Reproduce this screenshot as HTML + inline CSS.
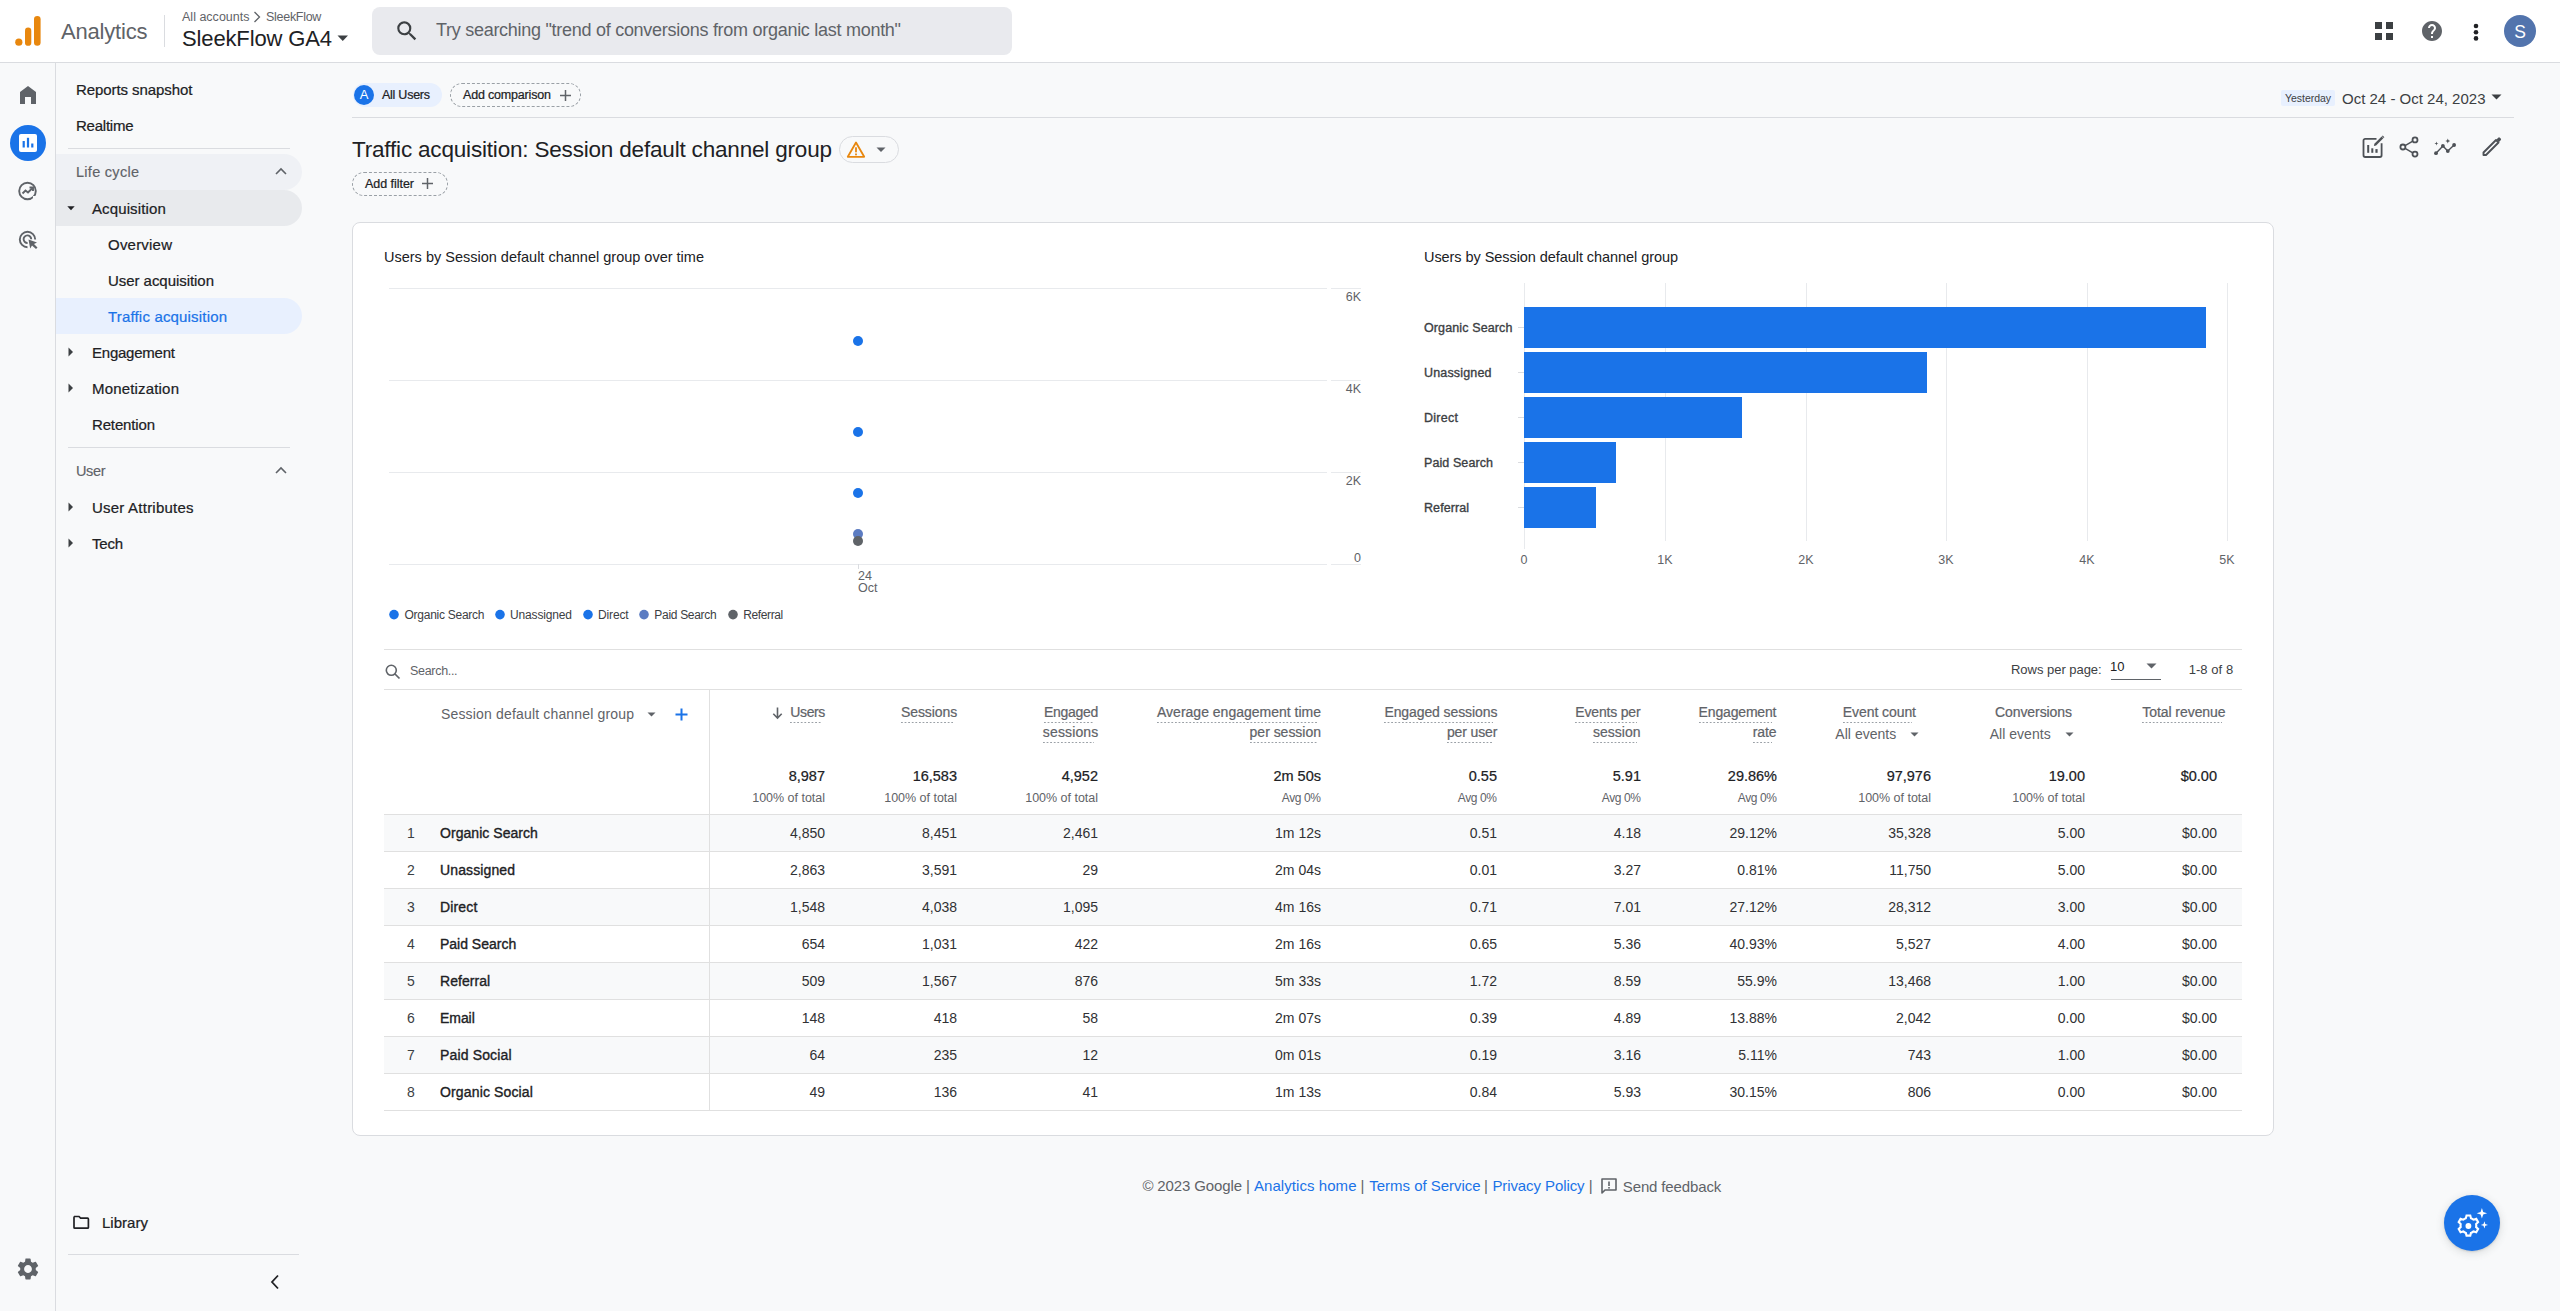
<!DOCTYPE html>
<html><head><meta charset="utf-8"><style>*{box-sizing:border-box;margin:0;padding:0}
html,body{width:2560px;height:1311px;overflow:hidden;background:#f8f9fa;font-family:"Liberation Sans",sans-serif;color:#202124}
.a{position:absolute;white-space:nowrap}
</style></head><body>
<div class="a" style="left:0px;top:0px;width:2560px;height:62px;background:#fff"></div>
<div class="a" style="left:0px;top:62px;width:2560px;height:1px;background:#dadce0"></div>
<svg class="a" style="left:0px;top:0px" width="60" height="62" viewBox="0 0 60 62"><circle cx="18.8" cy="42.2" r="3.6" fill="#e8870e"/><rect x="25" y="27.6" width="6.3" height="18.2" rx="3.15" fill="#e8870e"/><rect x="34" y="16" width="6.6" height="29.8" rx="3.3" fill="#e8870e"/></svg>
<div class="a" id="t1" style="top:15.50px;left:61px;font-size:22px;line-height:31px;color:#5f6368;letter-spacing:-0.193px;">Analytics</div>
<div class="a" style="left:164px;top:15px;width:1px;height:32px;background:#dadce0"></div>
<div class="a" id="t2" style="top:8.00px;left:182px;font-size:12.5px;line-height:18px;color:#5f6368;letter-spacing:0.009px;">All accounts</div>
<svg class="a" style="left:253px;top:11px" width="8" height="12" viewBox="0 0 8 12"><path d="M1.5 1 L6.5 6 L1.5 11" stroke="#5f6368" stroke-width="1.3" fill="none"/></svg>
<div class="a" id="t3" style="top:8.00px;left:266px;font-size:12.5px;line-height:18px;color:#5f6368;letter-spacing:-0.284px;">SleekFlow</div>
<div class="a" id="t4" style="top:22.50px;left:182px;font-size:22px;line-height:31px;color:#202124;letter-spacing:-0.135px;">SleekFlow GA4</div>
<svg class="a" style="left:337px;top:35px" width="12" height="7" viewBox="0 0 12 7"><path d="M0.5 0.5 L5.75 6 L11 0.5Z" fill="#3c4043"/></svg>
<div class="a" style="left:372px;top:7px;width:640px;height:48px;background:#e9eaee;border-radius:8px"></div>
<svg class="a" style="left:394px;top:18px" width="26" height="26" viewBox="0 0 24 24"><path fill="#3c4043" d="M15.5 14h-.79l-.28-.27A6.47 6.47 0 0 0 16 9.5 6.5 6.5 0 1 0 9.5 16c1.61 0 3.09-.59 4.23-1.57l.27.28v.79l5 4.99L20.49 19l-4.99-5zm-6 0C7.01 14 5 11.99 5 9.5S7.01 5 9.5 5 14 7.01 14 9.5 11.99 14 9.5 14z"/></svg>
<div class="a" id="t5" style="top:17.50px;left:436px;font-size:18px;line-height:25px;color:#5f6368;letter-spacing:-0.277px;">Try searching "trend of conversions from organic last month"</div>
<svg class="a" style="left:2374px;top:21px" width="20" height="20" viewBox="0 0 20 20"><rect x="1" y="1" width="7" height="7" fill="#3c4043"/><rect x="12" y="1" width="7" height="7" fill="#3c4043"/><rect x="1" y="12" width="7" height="7" fill="#3c4043"/><rect x="12" y="12" width="7" height="7" fill="#3c4043"/></svg>
<svg class="a" style="left:2420px;top:19px" width="24" height="24" viewBox="0 0 24 24"><path fill="#5f6368" d="M12 2C6.48 2 2 6.48 2 12s4.48 10 10 10 10-4.48 10-10S17.52 2 12 2zm1 17h-2v-2h2v2zm2.07-7.75l-.9.92C13.45 12.9 13 13.5 13 15h-2v-.5c0-1.1.45-2.1 1.17-2.83l1.24-1.26c.37-.36.59-.86.59-1.41 0-1.1-.9-2-2-2s-2 .9-2 2H8c0-2.21 1.79-4 4-4s4 1.79 4 4c0 .88-.36 1.68-.93 2.25z"/></svg>
<svg class="a" style="left:2470px;top:20px" width="12" height="24" viewBox="0 0 12 24"><circle cx="6" cy="6" r="2.3" fill="#202124"/><circle cx="6" cy="12.2" r="2.3" fill="#202124"/><circle cx="6" cy="18.4" r="2.3" fill="#202124"/></svg>
<div class="a" style="left:2504px;top:15px;width:32px;height:32px;background:#5274ad;border-radius:50%"></div>
<div class="a" id="t6" style="top:19.50px;left:2520px;transform:translateX(-50%);font-size:17.5px;line-height:24px;color:#fff;">S</div>
<div class="a" style="left:55px;top:63px;width:1px;height:1248px;background:#dadce0"></div>
<svg class="a" style="left:16px;top:83px" width="24" height="24" viewBox="0 0 24 24"><path fill="#5f6368" d="M12 3L4 9v12h5v-7h6v7h5V9z"/></svg>
<div class="a" style="left:10px;top:125px;width:36px;height:36px;background:#1a73e8;border-radius:50%"></div>
<svg class="a" style="left:18px;top:133px" width="20" height="20" viewBox="0 0 20 20"><rect x="1" y="1" width="18" height="18" rx="2" fill="#fff"/><rect x="4.6" y="8" width="2.2" height="6.5" fill="#1a73e8"/><rect x="8.9" y="4.8" width="2.2" height="9.7" fill="#1a73e8"/><rect x="13.2" y="10.5" width="2.2" height="4" fill="#1a73e8"/></svg>
<svg class="a" style="left:16px;top:179px" width="24" height="24" viewBox="0 0 24 24"><circle cx="11.5" cy="12" r="8.3" fill="none" stroke="#5f6368" stroke-width="1.9"/><path d="M6.5 14.5 L9.5 11.5 L12 13.5 L16 9.5" fill="none" stroke="#5f6368" stroke-width="1.9"/><path d="M13.5 8.5 L17 8.5 L17 12" fill="none" stroke="#5f6368" stroke-width="1.9"/><rect x="17" y="17" width="4" height="4" fill="#f8f9fa"/></svg>
<svg class="a" style="left:16px;top:227px" width="24" height="24" viewBox="0 0 24 24"><path d="M19.2 12.5 A7.7 7.7 0 1 0 11.5 20.2" fill="none" stroke="#5f6368" stroke-width="1.9"/><path d="M15.2 12.2 A3.8 3.8 0 1 0 11.6 16" fill="none" stroke="#5f6368" stroke-width="1.9"/><path d="M12.5 12.5 L14.2 21.5 L16 18.5 L20 22 L21.5 20.5 L18 17 L21 15.5Z" fill="#5f6368"/></svg>
<svg class="a" style="left:15px;top:1256px" width="26" height="26" viewBox="0 0 24 24"><path fill="#5f6368" d="M19.14 12.94c.04-.3.06-.61.06-.94 0-.32-.02-.64-.07-.94l2.03-1.58a.49.49 0 0 0 .12-.61l-1.92-3.32a.49.49 0 0 0-.59-.22l-2.39.96c-.5-.38-1.03-.7-1.62-.94l-.36-2.54a.48.48 0 0 0-.48-.41h-3.84c-.24 0-.43.17-.47.41l-.36 2.54c-.59.24-1.13.57-1.62.94l-2.39-.96a.48.48 0 0 0-.59.22L2.74 8.87c-.12.21-.08.47.12.61l2.03 1.58c-.05.3-.09.63-.09.94s.02.64.07.94l-2.03 1.58a.49.49 0 0 0-.12.61l1.92 3.32c.12.22.37.29.59.22l2.39-.96c.5.38 1.03.7 1.62.94l.36 2.54c.05.24.24.41.48.41h3.84c.24 0 .44-.17.47-.41l.36-2.54c.59-.24 1.13-.56 1.62-.94l2.39.96c.22.08.47 0 .59-.22l1.92-3.32c.12-.22.07-.47-.12-.61l-2.01-1.58zM12 15.6c-1.98 0-3.6-1.62-3.6-3.6s1.62-3.6 3.6-3.6 3.6 1.62 3.6 3.6-1.62 3.6-3.6 3.6z"/></svg>
<div class="a" id="t7" style="top:78.50px;left:76px;font-size:15px;line-height:21px;color:#202124;-webkit-text-stroke:0.22px currentColor;letter-spacing:-0.072px;">Reports snapshot</div>
<div class="a" id="t8" style="top:114.50px;left:76px;font-size:15px;line-height:21px;color:#202124;-webkit-text-stroke:0.22px currentColor;letter-spacing:-0.241px;">Realtime</div>
<div class="a" style="left:68px;top:148px;width:222px;height:1px;background:#dadce0"></div>
<div class="a" style="left:56px;top:154px;width:246px;height:36px;background:#eff1f5;border-radius:0 18px 18px 0"></div>
<div class="a" id="t9" style="top:162.00px;left:76px;font-size:14.5px;line-height:20px;color:#5f6368;-webkit-text-stroke:0.15px currentColor;letter-spacing:0.283px;">Life cycle</div>
<svg class="a" style="left:274px;top:166px" width="14" height="10" viewBox="0 0 14 10"><path d="M2 8 L7 3 L12 8" fill="none" stroke="#5f6368" stroke-width="1.6"/></svg>
<div class="a" style="left:56px;top:190px;width:246px;height:36px;background:#e8eaed;border-radius:0 18px 18px 0"></div>
<svg class="a" style="left:67px;top:206px" width="8" height="5" viewBox="0 0 8 5"><path d="M0.3 0.3 L4 4.3 L7.7 0.3Z" fill="#202124"/></svg>
<div class="a" id="t10" style="top:197.50px;left:92px;font-size:15px;line-height:21px;color:#202124;-webkit-text-stroke:0.22px currentColor;letter-spacing:0.120px;">Acquisition</div>
<div class="a" id="t11" style="top:233.50px;left:108px;font-size:15px;line-height:21px;color:#202124;-webkit-text-stroke:0.22px currentColor;letter-spacing:0.212px;">Overview</div>
<div class="a" id="t12" style="top:269.50px;left:108px;font-size:15px;line-height:21px;color:#202124;-webkit-text-stroke:0.22px currentColor;letter-spacing:-0.048px;">User acquisition</div>
<div class="a" style="left:56px;top:298px;width:246px;height:36px;background:#e8f0fe;border-radius:0 18px 18px 0"></div>
<div class="a" id="t13" style="top:305.50px;left:108px;font-size:15px;line-height:21px;color:#1a73e8;-webkit-text-stroke:0.22px currentColor;letter-spacing:0.173px;">Traffic acquisition</div>
<svg class="a" style="left:68px;top:347px" width="6" height="10" viewBox="0 0 6 10"><path d="M0.5 0.5 L5 5 L0.5 9.5Z" fill="#3c4043"/></svg>
<div class="a" id="t14" style="top:341.50px;left:92px;font-size:15px;line-height:21px;color:#202124;-webkit-text-stroke:0.22px currentColor;letter-spacing:-0.231px;">Engagement</div>
<svg class="a" style="left:68px;top:383px" width="6" height="10" viewBox="0 0 6 10"><path d="M0.5 0.5 L5 5 L0.5 9.5Z" fill="#3c4043"/></svg>
<div class="a" id="t15" style="top:377.50px;left:92px;font-size:15px;line-height:21px;color:#202124;-webkit-text-stroke:0.22px currentColor;letter-spacing:0.176px;">Monetization</div>
<svg class="a" style="left:68px;top:502px" width="6" height="10" viewBox="0 0 6 10"><path d="M0.5 0.5 L5 5 L0.5 9.5Z" fill="#3c4043"/></svg>
<div class="a" id="t16" style="top:496.50px;left:92px;font-size:15px;line-height:21px;color:#202124;-webkit-text-stroke:0.22px currentColor;letter-spacing:0.223px;">User Attributes</div>
<svg class="a" style="left:68px;top:538px" width="6" height="10" viewBox="0 0 6 10"><path d="M0.5 0.5 L5 5 L0.5 9.5Z" fill="#3c4043"/></svg>
<div class="a" id="t17" style="top:532.50px;left:92px;font-size:15px;line-height:21px;color:#202124;-webkit-text-stroke:0.22px currentColor;letter-spacing:-0.229px;">Tech</div>
<div class="a" id="t18" style="top:413.50px;left:92px;font-size:15px;line-height:21px;color:#202124;-webkit-text-stroke:0.22px currentColor;letter-spacing:-0.152px;">Retention</div>
<div class="a" style="left:68px;top:447px;width:222px;height:1px;background:#dadce0"></div>
<div class="a" id="t19" style="top:461.00px;left:76px;font-size:14.5px;line-height:20px;color:#5f6368;-webkit-text-stroke:0.15px currentColor;letter-spacing:-0.375px;">User</div>
<svg class="a" style="left:274px;top:465px" width="14" height="10" viewBox="0 0 14 10"><path d="M2 8 L7 3 L12 8" fill="none" stroke="#5f6368" stroke-width="1.6"/></svg>
<svg class="a" style="left:72px;top:1214px" width="18" height="16" viewBox="0 0 18 16"><path d="M2 2.5 h5 l1.6 1.6 h7 a0.8 0.8 0 0 1 .8 .8 v8.5 a0.8 0.8 0 0 1 -.8 .8 h-12.8 a0.8 0.8 0 0 1 -.8 -.8 v-10 a0.8 0.8 0 0 1 .8 -.8z" fill="none" stroke="#202124" stroke-width="1.7"/></svg>
<div class="a" id="t20" style="top:1211.50px;left:102px;font-size:15px;line-height:21px;color:#202124;-webkit-text-stroke:0.22px currentColor;letter-spacing:0.023px;">Library</div>
<div class="a" style="left:68px;top:1254px;width:231px;height:1px;background:#dadce0"></div>
<svg class="a" style="left:269px;top:1274px" width="12" height="16" viewBox="0 0 12 16"><path d="M9 1.5 L3 8 L9 14.5" fill="none" stroke="#202124" stroke-width="1.8"/></svg>
<div class="a" style="left:353px;top:83px;width:89px;height:24px;background:#e8f0fe;border-radius:12px"></div>
<div class="a" style="left:354px;top:85px;width:20px;height:20px;background:#1a73e8;border-radius:50%"></div>
<div class="a" id="t21" style="top:86.00px;left:364px;transform:translateX(-50%);font-size:13px;line-height:18px;color:#fff;">A</div>
<div class="a" id="t22" style="top:86.00px;left:382px;font-size:12.5px;line-height:18px;color:#202124;-webkit-text-stroke:0.22px currentColor;letter-spacing:-0.252px;">All Users</div>
<div class="a" style="left:450px;top:83px;width:131px;height:24px;border:1px dashed #9aa0a6;border-radius:12px"></div>
<div class="a" id="t23" style="top:86.00px;left:463px;font-size:12.5px;line-height:18px;color:#202124;-webkit-text-stroke:0.22px currentColor;letter-spacing:-0.179px;">Add comparison</div>
<svg class="a" style="left:559px;top:89px" width="13" height="13" viewBox="0 0 13 13"><path d="M6.5 1 V12 M1 6.5 H12" stroke="#5f6368" stroke-width="1.5"/></svg>
<div class="a" style="left:2281px;top:90px;width:54px;height:16px;background:#e8f0fe;border-radius:2px"></div>
<div class="a" id="t24" style="top:90.50px;left:2308px;transform:translateX(-50%);font-size:10.5px;line-height:15px;color:#3c4043;letter-spacing:-0.039px;">Yesterday</div>
<div class="a" id="t25" style="top:87.50px;left:2342px;font-size:15px;line-height:21px;color:#3c4043;letter-spacing:0.004px;">Oct 24 - Oct 24, 2023</div>
<svg class="a" style="left:2491px;top:94px" width="11" height="6" viewBox="0 0 11 6"><path d="M0.5 0.5 L5.5 5.5 L10.5 0.5Z" fill="#3c4043"/></svg>
<div class="a" style="left:352px;top:117px;width:2162px;height:1px;background:#dadce0"></div>
<div class="a" id="t26" style="top:133.50px;left:352px;font-size:22.5px;line-height:31px;color:#202124;letter-spacing:-0.185px;">Traffic acquisition: Session default channel group</div>
<div class="a" style="left:839px;top:136px;width:60px;height:27px;border:1px solid #dadce0;border-radius:14px"></div>
<svg class="a" style="left:846px;top:140px" width="20" height="19" viewBox="0 0 20 19"><path d="M10 2.5 L18.2 16.8 H1.8Z" fill="none" stroke="#e8870e" stroke-width="1.8" stroke-linejoin="round"/><rect x="9.1" y="7.3" width="1.8" height="5" fill="#e8870e"/><rect x="9.1" y="13.5" width="1.8" height="1.8" fill="#e8870e"/></svg>
<svg class="a" style="left:876px;top:147px" width="10" height="6" viewBox="0 0 10 6"><path d="M0.5 0.5 L5 5 L9.5 0.5Z" fill="#5f6368"/></svg>
<div class="a" style="left:352px;top:172px;width:96px;height:24px;border:1px dashed #9aa0a6;border-radius:12px"></div>
<div class="a" id="t27" style="top:175.00px;left:365px;font-size:12.5px;line-height:18px;color:#202124;-webkit-text-stroke:0.22px currentColor;letter-spacing:-0.038px;">Add filter</div>
<svg class="a" style="left:421px;top:177px" width="13" height="13" viewBox="0 0 13 13"><path d="M6.5 1 V12 M1 6.5 H12" stroke="#5f6368" stroke-width="1.5"/></svg>
<svg class="a" style="left:2355px;top:130px" width="110" height="35" viewBox="0 0 110 35"><path d="M21.5 8.9 H10.2 a1.7 1.7 0 0 0 -1.7 1.7 V25.3 a1.7 1.7 0 0 0 1.7 1.7 H24.9 a1.7 1.7 0 0 0 1.7 -1.7 V13.2" fill="none" stroke="#4d5156" stroke-width="1.8"/><rect x="12.2" y="15" width="2" height="7.8" fill="#4d5156"/><rect x="16.3" y="18.3" width="2" height="4.5" fill="#4d5156"/><rect x="20.4" y="19.1" width="2.2" height="3.7" fill="#4d5156"/><path d="M18.9 15.9 L19.4 13.8 L26.6 6.6 L28.3 8.3 L21.1 15.5Z" fill="#4d5156"/><path d="M26.9 6.3 L27.7 5.5 L29.4 7.2 L28.6 8Z" fill="#4d5156"/><circle cx="60" cy="9.9" r="2.5" fill="none" stroke="#4d5156" stroke-width="1.8"/><circle cx="47.9" cy="17" r="2.5" fill="none" stroke="#4d5156" stroke-width="1.8"/><circle cx="60" cy="24.1" r="2.5" fill="none" stroke="#4d5156" stroke-width="1.8"/><path d="M50.1 15.7 L57.8 11.2 M50.1 18.3 L57.8 22.8" stroke="#4d5156" stroke-width="1.5"/><path d="M81 23.2 L87.9 15.9 L92.8 21.1 L99.1 15" fill="none" stroke="#4d5156" stroke-width="1.4"/><circle cx="81" cy="23.2" r="1.9" fill="#4d5156"/><circle cx="87.9" cy="15.9" r="1.9" fill="#4d5156"/><circle cx="92.8" cy="21.1" r="1.9" fill="#4d5156"/><circle cx="99.1" cy="15" r="1.9" fill="#4d5156"/><path d="M81.4 11.5 L81.9 13 L83.4 13.5 L81.9 14 L81.4 15.5 L80.9 14 L79.4 13.5 L80.9 13Z" fill="#4d5156"/><path d="M92.8 8.6 L93.5 10.3 L95.2 11 L93.5 11.7 L92.8 13.4 L92.1 11.7 L90.4 11 L92.1 10.3Z" fill="#4d5156"/></svg>
<svg class="a" style="left:2479.5px;top:135px" width="22" height="22" viewBox="0 0 22 22"><path d="M3.5 17.5 V20 H6 L18.5 7.5 L16 5 Z" fill="none" stroke="#4d5156" stroke-width="1.9" stroke-linejoin="round"/><path d="M16.5 4.5 L18.2 2.8 A1.2 1.2 0 0 1 19.9 2.8 L20.7 3.6 A1.2 1.2 0 0 1 20.7 5.3 L19 7Z" fill="#4d5156"/></svg>
<div class="a" style="left:352px;top:222px;width:1922px;height:914px;background:#fff;border:1px solid #dadce0;border-radius:8px"></div>
<div class="a" id="t28" style="top:247.00px;left:384px;font-size:14.5px;line-height:20px;color:#202124;letter-spacing:0.000px;">Users by Session default channel group over time</div>
<div class="a" style="left:389px;top:288px;width:938px;height:1px;background:#e8eaed"></div>
<div class="a" style="left:1331px;top:288px;width:30px;height:1px;background:#e8eaed"></div>
<div class="a" id="t29" style="top:288.00px;right:1199px;font-size:12.5px;line-height:18px;color:#5f6368;">6K</div>
<div class="a" style="left:389px;top:380px;width:938px;height:1px;background:#e8eaed"></div>
<div class="a" style="left:1331px;top:380px;width:30px;height:1px;background:#e8eaed"></div>
<div class="a" id="t30" style="top:380.00px;right:1199px;font-size:12.5px;line-height:18px;color:#5f6368;">4K</div>
<div class="a" style="left:389px;top:472px;width:938px;height:1px;background:#e8eaed"></div>
<div class="a" style="left:1331px;top:472px;width:30px;height:1px;background:#e8eaed"></div>
<div class="a" id="t31" style="top:472.00px;right:1199px;font-size:12.5px;line-height:18px;color:#5f6368;">2K</div>
<div class="a" style="left:389px;top:564px;width:938px;height:1px;background:#e8eaed"></div>
<div class="a" style="left:1331px;top:564px;width:30px;height:1px;background:#e8eaed"></div>
<div class="a" id="t32" style="top:548.50px;right:1199px;font-size:12.5px;line-height:18px;color:#5f6368;">0</div>
<div class="a" style="left:858px;top:564px;width:1px;height:5px;background:#dadce0"></div>
<div class="a" id="t33" style="top:567.00px;left:858px;font-size:12.5px;line-height:18px;color:#5f6368;">24</div>
<div class="a" id="t34" style="top:579.00px;left:858px;font-size:12.5px;line-height:18px;color:#5f6368;">Oct</div>
<svg class="a" style="left:840px;top:320px" width="40" height="240" viewBox="0 0 40 240"><circle cx="18" cy="21" r="5" fill="#1a73e8"/><circle cx="18" cy="112" r="5" fill="#1a73e8"/><circle cx="18" cy="173" r="5" fill="#1a73e8"/><circle cx="18" cy="214" r="5" fill="#5c7cc2"/><circle cx="18" cy="221" r="5" fill="#5f6368"/></svg>
<svg class="a" style="left:384px;top:605px" width="360" height="20" viewBox="0 0 360 20"><circle cx="10" cy="9.6" r="4.8" fill="#1a73e8"/><circle cx="116" cy="9.6" r="4.8" fill="#1a73e8"/><circle cx="204" cy="9.6" r="4.8" fill="#1a73e8"/><circle cx="260" cy="9.6" r="4.8" fill="#5c7cc2"/><circle cx="349" cy="9.6" r="4.8" fill="#5f6368"/></svg>
<div class="a" id="t35" style="top:606.50px;left:404.5px;font-size:12px;line-height:17px;color:#3c4043;letter-spacing:-0.260px;">Organic Search</div>
<div class="a" id="t36" style="top:606.50px;left:510px;font-size:12px;line-height:17px;color:#3c4043;letter-spacing:-0.153px;">Unassigned</div>
<div class="a" id="t37" style="top:606.50px;left:598px;font-size:12px;line-height:17px;color:#3c4043;letter-spacing:-0.129px;">Direct</div>
<div class="a" id="t38" style="top:606.50px;left:654.3px;font-size:12px;line-height:17px;color:#3c4043;letter-spacing:-0.298px;">Paid Search</div>
<div class="a" id="t39" style="top:606.50px;left:743.3px;font-size:12px;line-height:17px;color:#3c4043;letter-spacing:-0.384px;">Referral</div>
<div class="a" id="t40" style="top:247.00px;left:1424px;font-size:14.5px;line-height:20px;color:#202124;letter-spacing:-0.063px;">Users by Session default channel group</div>
<div class="a" style="left:1524px;top:283px;width:1px;height:266px;background:#e8eaed"></div>
<div class="a" id="t41" style="top:551.00px;left:1524px;transform:translateX(-50%);font-size:12.5px;line-height:18px;color:#5f6368;">0</div>
<div class="a" style="left:1665px;top:283px;width:1px;height:258px;background:#e8eaed"></div>
<div class="a" id="t42" style="top:551.00px;left:1665px;transform:translateX(-50%);font-size:12.5px;line-height:18px;color:#5f6368;">1K</div>
<div class="a" style="left:1806px;top:283px;width:1px;height:258px;background:#e8eaed"></div>
<div class="a" id="t43" style="top:551.00px;left:1806px;transform:translateX(-50%);font-size:12.5px;line-height:18px;color:#5f6368;">2K</div>
<div class="a" style="left:1946px;top:283px;width:1px;height:258px;background:#e8eaed"></div>
<div class="a" id="t44" style="top:551.00px;left:1946px;transform:translateX(-50%);font-size:12.5px;line-height:18px;color:#5f6368;">3K</div>
<div class="a" style="left:2087px;top:283px;width:1px;height:258px;background:#e8eaed"></div>
<div class="a" id="t45" style="top:551.00px;left:2087px;transform:translateX(-50%);font-size:12.5px;line-height:18px;color:#5f6368;">4K</div>
<div class="a" style="left:2227px;top:283px;width:1px;height:258px;background:#e8eaed"></div>
<div class="a" id="t46" style="top:551.00px;left:2227px;transform:translateX(-50%);font-size:12.5px;line-height:18px;color:#5f6368;">5K</div>
<div class="a" style="left:1524px;top:307px;width:682px;height:41px;background:#1a73e8"></div>
<div class="a" style="left:1518px;top:327px;width:6px;height:1px;background:#dadce0"></div>
<div class="a" id="t47" style="top:318.50px;left:1424px;font-size:12.5px;line-height:18px;color:#3c4043;-webkit-text-stroke:0.35px currentColor;letter-spacing:0.119px;">Organic Search</div>
<div class="a" style="left:1524px;top:352px;width:403px;height:41px;background:#1a73e8"></div>
<div class="a" style="left:1518px;top:372px;width:6px;height:1px;background:#dadce0"></div>
<div class="a" id="t48" style="top:363.50px;left:1424px;font-size:12.5px;line-height:18px;color:#3c4043;-webkit-text-stroke:0.35px currentColor;letter-spacing:0.165px;">Unassigned</div>
<div class="a" style="left:1524px;top:397px;width:218px;height:41px;background:#1a73e8"></div>
<div class="a" style="left:1518px;top:417px;width:6px;height:1px;background:#dadce0"></div>
<div class="a" id="t49" style="top:408.50px;left:1424px;font-size:12.5px;line-height:18px;color:#3c4043;-webkit-text-stroke:0.35px currentColor;letter-spacing:0.269px;">Direct</div>
<div class="a" style="left:1524px;top:442px;width:92px;height:41px;background:#1a73e8"></div>
<div class="a" style="left:1518px;top:462px;width:6px;height:1px;background:#dadce0"></div>
<div class="a" id="t50" style="top:453.50px;left:1424px;font-size:12.5px;line-height:18px;color:#3c4043;-webkit-text-stroke:0.35px currentColor;letter-spacing:0.089px;">Paid Search</div>
<div class="a" style="left:1524px;top:487px;width:72px;height:41px;background:#1a73e8"></div>
<div class="a" style="left:1518px;top:507px;width:6px;height:1px;background:#dadce0"></div>
<div class="a" id="t51" style="top:498.50px;left:1424px;font-size:12.5px;line-height:18px;color:#3c4043;-webkit-text-stroke:0.35px currentColor;letter-spacing:0.076px;">Referral</div>
<div class="a" style="left:384px;top:649px;width:1858px;height:1px;background:#e0e0e0"></div>
<svg class="a" style="left:384px;top:663px" width="18" height="18" viewBox="0 0 18 18"><circle cx="7.3" cy="7.3" r="5" fill="none" stroke="#5f6368" stroke-width="1.6"/><path d="M11 11 L15.5 15.5" stroke="#5f6368" stroke-width="1.7"/></svg>
<div class="a" id="t52" style="top:661.50px;left:410px;font-size:12.5px;line-height:18px;color:#5f6368;letter-spacing:-0.304px;">Search...</div>
<div class="a" id="t53" style="top:660.50px;left:2011px;font-size:13px;line-height:18px;color:#3c4043;letter-spacing:-0.028px;">Rows per page:</div>
<div class="a" id="t54" style="top:658.00px;left:2110px;font-size:13px;line-height:18px;color:#202124;">10</div>
<svg class="a" style="left:2146px;top:663px" width="12" height="7" viewBox="0 0 12 7"><path d="M0.5 0.5 L5.5 5.5 L10.5 0.5Z" fill="#5f6368"/></svg>
<div class="a" style="left:2111px;top:679px;width:50px;height:1px;background:#5f6368"></div>
<div class="a" id="t55" style="top:660.50px;right:326.8000000000002px;font-size:13px;line-height:18px;color:#3c4043;letter-spacing:0.058px;margin-right:-0.058px;">1-8 of 8</div>
<div class="a" style="left:384px;top:689px;width:1858px;height:1px;background:#e0e0e0"></div>
<div class="a" style="left:384px;top:814px;width:1858px;height:37px;background:#f8f9fa"></div>
<div class="a" style="left:384px;top:888px;width:1858px;height:37px;background:#f8f9fa"></div>
<div class="a" style="left:384px;top:962px;width:1858px;height:37px;background:#f8f9fa"></div>
<div class="a" style="left:384px;top:1036px;width:1858px;height:37px;background:#f8f9fa"></div>
<div class="a" style="left:384px;top:851px;width:1858px;height:1px;background:#e0e0e0"></div>
<div class="a" style="left:384px;top:888px;width:1858px;height:1px;background:#e0e0e0"></div>
<div class="a" style="left:384px;top:925px;width:1858px;height:1px;background:#e0e0e0"></div>
<div class="a" style="left:384px;top:962px;width:1858px;height:1px;background:#e0e0e0"></div>
<div class="a" style="left:384px;top:999px;width:1858px;height:1px;background:#e0e0e0"></div>
<div class="a" style="left:384px;top:1036px;width:1858px;height:1px;background:#e0e0e0"></div>
<div class="a" style="left:384px;top:1073px;width:1858px;height:1px;background:#e0e0e0"></div>
<div class="a" style="left:384px;top:1110px;width:1858px;height:1px;background:#e0e0e0"></div>
<div class="a" style="left:384px;top:814px;width:1858px;height:1px;background:#e0e0e0"></div>
<div class="a" style="left:709px;top:689px;width:1px;height:422px;background:#e0e0e0"></div>
<div class="a" id="t56" style="top:823.00px;left:411px;transform:translateX(-50%);font-size:14px;line-height:20px;color:#3c4043;">1</div>
<div class="a" id="t57" style="top:823.00px;left:440px;font-size:14px;line-height:20px;color:#202124;-webkit-text-stroke:0.35px currentColor;letter-spacing:0.048px;">Organic Search</div>
<div class="a" id="t58" style="top:823.00px;right:1735px;font-size:14px;line-height:20px;color:#303134;">4,850</div>
<div class="a" id="t59" style="top:823.00px;right:1603px;font-size:14px;line-height:20px;color:#303134;">8,451</div>
<div class="a" id="t60" style="top:823.00px;right:1462px;font-size:14px;line-height:20px;color:#303134;">2,461</div>
<div class="a" id="t61" style="top:823.00px;right:1239px;font-size:14px;line-height:20px;color:#303134;">1m 12s</div>
<div class="a" id="t62" style="top:823.00px;right:1063px;font-size:14px;line-height:20px;color:#303134;">0.51</div>
<div class="a" id="t63" style="top:823.00px;right:919px;font-size:14px;line-height:20px;color:#303134;">4.18</div>
<div class="a" id="t64" style="top:823.00px;right:783px;font-size:14px;line-height:20px;color:#303134;">29.12%</div>
<div class="a" id="t65" style="top:823.00px;right:629px;font-size:14px;line-height:20px;color:#303134;">35,328</div>
<div class="a" id="t66" style="top:823.00px;right:475px;font-size:14px;line-height:20px;color:#303134;">5.00</div>
<div class="a" id="t67" style="top:823.00px;right:343px;font-size:14px;line-height:20px;color:#303134;">$0.00</div>
<div class="a" id="t68" style="top:860.00px;left:411px;transform:translateX(-50%);font-size:14px;line-height:20px;color:#3c4043;">2</div>
<div class="a" id="t69" style="top:860.00px;left:440px;font-size:14px;line-height:20px;color:#202124;-webkit-text-stroke:0.35px currentColor;letter-spacing:0.118px;">Unassigned</div>
<div class="a" id="t70" style="top:860.00px;right:1735px;font-size:14px;line-height:20px;color:#303134;">2,863</div>
<div class="a" id="t71" style="top:860.00px;right:1603px;font-size:14px;line-height:20px;color:#303134;">3,591</div>
<div class="a" id="t72" style="top:860.00px;right:1462px;font-size:14px;line-height:20px;color:#303134;">29</div>
<div class="a" id="t73" style="top:860.00px;right:1239px;font-size:14px;line-height:20px;color:#303134;">2m 04s</div>
<div class="a" id="t74" style="top:860.00px;right:1063px;font-size:14px;line-height:20px;color:#303134;">0.01</div>
<div class="a" id="t75" style="top:860.00px;right:919px;font-size:14px;line-height:20px;color:#303134;">3.27</div>
<div class="a" id="t76" style="top:860.00px;right:783px;font-size:14px;line-height:20px;color:#303134;">0.81%</div>
<div class="a" id="t77" style="top:860.00px;right:629px;font-size:14px;line-height:20px;color:#303134;">11,750</div>
<div class="a" id="t78" style="top:860.00px;right:475px;font-size:14px;line-height:20px;color:#303134;">5.00</div>
<div class="a" id="t79" style="top:860.00px;right:343px;font-size:14px;line-height:20px;color:#303134;">$0.00</div>
<div class="a" id="t80" style="top:897.00px;left:411px;transform:translateX(-50%);font-size:14px;line-height:20px;color:#3c4043;">3</div>
<div class="a" id="t81" style="top:897.00px;left:440px;font-size:14px;line-height:20px;color:#202124;-webkit-text-stroke:0.35px currentColor;letter-spacing:0.147px;">Direct</div>
<div class="a" id="t82" style="top:897.00px;right:1735px;font-size:14px;line-height:20px;color:#303134;">1,548</div>
<div class="a" id="t83" style="top:897.00px;right:1603px;font-size:14px;line-height:20px;color:#303134;">4,038</div>
<div class="a" id="t84" style="top:897.00px;right:1462px;font-size:14px;line-height:20px;color:#303134;">1,095</div>
<div class="a" id="t85" style="top:897.00px;right:1239px;font-size:14px;line-height:20px;color:#303134;">4m 16s</div>
<div class="a" id="t86" style="top:897.00px;right:1063px;font-size:14px;line-height:20px;color:#303134;">0.71</div>
<div class="a" id="t87" style="top:897.00px;right:919px;font-size:14px;line-height:20px;color:#303134;">7.01</div>
<div class="a" id="t88" style="top:897.00px;right:783px;font-size:14px;line-height:20px;color:#303134;">27.12%</div>
<div class="a" id="t89" style="top:897.00px;right:629px;font-size:14px;line-height:20px;color:#303134;">28,312</div>
<div class="a" id="t90" style="top:897.00px;right:475px;font-size:14px;line-height:20px;color:#303134;">3.00</div>
<div class="a" id="t91" style="top:897.00px;right:343px;font-size:14px;line-height:20px;color:#303134;">$0.00</div>
<div class="a" id="t92" style="top:934.00px;left:411px;transform:translateX(-50%);font-size:14px;line-height:20px;color:#3c4043;">4</div>
<div class="a" id="t93" style="top:934.00px;left:440px;font-size:14px;line-height:20px;color:#202124;-webkit-text-stroke:0.35px currentColor;letter-spacing:-0.008px;">Paid Search</div>
<div class="a" id="t94" style="top:934.00px;right:1735px;font-size:14px;line-height:20px;color:#303134;">654</div>
<div class="a" id="t95" style="top:934.00px;right:1603px;font-size:14px;line-height:20px;color:#303134;">1,031</div>
<div class="a" id="t96" style="top:934.00px;right:1462px;font-size:14px;line-height:20px;color:#303134;">422</div>
<div class="a" id="t97" style="top:934.00px;right:1239px;font-size:14px;line-height:20px;color:#303134;">2m 16s</div>
<div class="a" id="t98" style="top:934.00px;right:1063px;font-size:14px;line-height:20px;color:#303134;">0.65</div>
<div class="a" id="t99" style="top:934.00px;right:919px;font-size:14px;line-height:20px;color:#303134;">5.36</div>
<div class="a" id="t100" style="top:934.00px;right:783px;font-size:14px;line-height:20px;color:#303134;">40.93%</div>
<div class="a" id="t101" style="top:934.00px;right:629px;font-size:14px;line-height:20px;color:#303134;">5,527</div>
<div class="a" id="t102" style="top:934.00px;right:475px;font-size:14px;line-height:20px;color:#303134;">4.00</div>
<div class="a" id="t103" style="top:934.00px;right:343px;font-size:14px;line-height:20px;color:#303134;">$0.00</div>
<div class="a" id="t104" style="top:971.00px;left:411px;transform:translateX(-50%);font-size:14px;line-height:20px;color:#3c4043;">5</div>
<div class="a" id="t105" style="top:971.00px;left:440px;font-size:14px;line-height:20px;color:#202124;-webkit-text-stroke:0.35px currentColor;letter-spacing:0.043px;">Referral</div>
<div class="a" id="t106" style="top:971.00px;right:1735px;font-size:14px;line-height:20px;color:#303134;">509</div>
<div class="a" id="t107" style="top:971.00px;right:1603px;font-size:14px;line-height:20px;color:#303134;">1,567</div>
<div class="a" id="t108" style="top:971.00px;right:1462px;font-size:14px;line-height:20px;color:#303134;">876</div>
<div class="a" id="t109" style="top:971.00px;right:1239px;font-size:14px;line-height:20px;color:#303134;">5m 33s</div>
<div class="a" id="t110" style="top:971.00px;right:1063px;font-size:14px;line-height:20px;color:#303134;">1.72</div>
<div class="a" id="t111" style="top:971.00px;right:919px;font-size:14px;line-height:20px;color:#303134;">8.59</div>
<div class="a" id="t112" style="top:971.00px;right:783px;font-size:14px;line-height:20px;color:#303134;">55.9%</div>
<div class="a" id="t113" style="top:971.00px;right:629px;font-size:14px;line-height:20px;color:#303134;">13,468</div>
<div class="a" id="t114" style="top:971.00px;right:475px;font-size:14px;line-height:20px;color:#303134;">1.00</div>
<div class="a" id="t115" style="top:971.00px;right:343px;font-size:14px;line-height:20px;color:#303134;">$0.00</div>
<div class="a" id="t116" style="top:1008.00px;left:411px;transform:translateX(-50%);font-size:14px;line-height:20px;color:#3c4043;">6</div>
<div class="a" id="t117" style="top:1008.00px;left:440px;font-size:14px;line-height:20px;color:#202124;-webkit-text-stroke:0.35px currentColor;letter-spacing:-0.054px;">Email</div>
<div class="a" id="t118" style="top:1008.00px;right:1735px;font-size:14px;line-height:20px;color:#303134;">148</div>
<div class="a" id="t119" style="top:1008.00px;right:1603px;font-size:14px;line-height:20px;color:#303134;">418</div>
<div class="a" id="t120" style="top:1008.00px;right:1462px;font-size:14px;line-height:20px;color:#303134;">58</div>
<div class="a" id="t121" style="top:1008.00px;right:1239px;font-size:14px;line-height:20px;color:#303134;">2m 07s</div>
<div class="a" id="t122" style="top:1008.00px;right:1063px;font-size:14px;line-height:20px;color:#303134;">0.39</div>
<div class="a" id="t123" style="top:1008.00px;right:919px;font-size:14px;line-height:20px;color:#303134;">4.89</div>
<div class="a" id="t124" style="top:1008.00px;right:783px;font-size:14px;line-height:20px;color:#303134;">13.88%</div>
<div class="a" id="t125" style="top:1008.00px;right:629px;font-size:14px;line-height:20px;color:#303134;">2,042</div>
<div class="a" id="t126" style="top:1008.00px;right:475px;font-size:14px;line-height:20px;color:#303134;">0.00</div>
<div class="a" id="t127" style="top:1008.00px;right:343px;font-size:14px;line-height:20px;color:#303134;">$0.00</div>
<div class="a" id="t128" style="top:1045.00px;left:411px;transform:translateX(-50%);font-size:14px;line-height:20px;color:#3c4043;">7</div>
<div class="a" id="t129" style="top:1045.00px;left:440px;font-size:14px;line-height:20px;color:#202124;-webkit-text-stroke:0.35px currentColor;letter-spacing:0.155px;">Paid Social</div>
<div class="a" id="t130" style="top:1045.00px;right:1735px;font-size:14px;line-height:20px;color:#303134;">64</div>
<div class="a" id="t131" style="top:1045.00px;right:1603px;font-size:14px;line-height:20px;color:#303134;">235</div>
<div class="a" id="t132" style="top:1045.00px;right:1462px;font-size:14px;line-height:20px;color:#303134;">12</div>
<div class="a" id="t133" style="top:1045.00px;right:1239px;font-size:14px;line-height:20px;color:#303134;">0m 01s</div>
<div class="a" id="t134" style="top:1045.00px;right:1063px;font-size:14px;line-height:20px;color:#303134;">0.19</div>
<div class="a" id="t135" style="top:1045.00px;right:919px;font-size:14px;line-height:20px;color:#303134;">3.16</div>
<div class="a" id="t136" style="top:1045.00px;right:783px;font-size:14px;line-height:20px;color:#303134;">5.11%</div>
<div class="a" id="t137" style="top:1045.00px;right:629px;font-size:14px;line-height:20px;color:#303134;">743</div>
<div class="a" id="t138" style="top:1045.00px;right:475px;font-size:14px;line-height:20px;color:#303134;">1.00</div>
<div class="a" id="t139" style="top:1045.00px;right:343px;font-size:14px;line-height:20px;color:#303134;">$0.00</div>
<div class="a" id="t140" style="top:1082.00px;left:411px;transform:translateX(-50%);font-size:14px;line-height:20px;color:#3c4043;">8</div>
<div class="a" id="t141" style="top:1082.00px;left:440px;font-size:14px;line-height:20px;color:#202124;-webkit-text-stroke:0.35px currentColor;letter-spacing:0.143px;">Organic Social</div>
<div class="a" id="t142" style="top:1082.00px;right:1735px;font-size:14px;line-height:20px;color:#303134;">49</div>
<div class="a" id="t143" style="top:1082.00px;right:1603px;font-size:14px;line-height:20px;color:#303134;">136</div>
<div class="a" id="t144" style="top:1082.00px;right:1462px;font-size:14px;line-height:20px;color:#303134;">41</div>
<div class="a" id="t145" style="top:1082.00px;right:1239px;font-size:14px;line-height:20px;color:#303134;">1m 13s</div>
<div class="a" id="t146" style="top:1082.00px;right:1063px;font-size:14px;line-height:20px;color:#303134;">0.84</div>
<div class="a" id="t147" style="top:1082.00px;right:919px;font-size:14px;line-height:20px;color:#303134;">5.93</div>
<div class="a" id="t148" style="top:1082.00px;right:783px;font-size:14px;line-height:20px;color:#303134;">30.15%</div>
<div class="a" id="t149" style="top:1082.00px;right:629px;font-size:14px;line-height:20px;color:#303134;">806</div>
<div class="a" id="t150" style="top:1082.00px;right:475px;font-size:14px;line-height:20px;color:#303134;">0.00</div>
<div class="a" id="t151" style="top:1082.00px;right:343px;font-size:14px;line-height:20px;color:#303134;">$0.00</div>
<div class="a" id="t152" style="top:704.00px;left:441px;font-size:14px;line-height:20px;color:#5f6368;letter-spacing:0.166px;">Session default channel group</div>
<svg class="a" style="left:647px;top:712px" width="9" height="5" viewBox="0 0 9 5"><path d="M0.5 0.5 L4.5 4.5 L8.5 0.5Z" fill="#5f6368"/></svg>
<svg class="a" style="left:675px;top:708px" width="13" height="13" viewBox="0 0 13 13"><path d="M6.5 0.5 V12.5 M0.5 6.5 H12.5" stroke="#1a73e8" stroke-width="2"/></svg>
<svg class="a" style="left:771px;top:706px" width="13" height="14" viewBox="0 0 13 14"><path d="M6.5 1.5 V12 M2.3 7.8 L6.5 12 L10.7 7.8" fill="none" stroke="#5f6368" stroke-width="1.6"/></svg>
<div class="a" id="t153" style="top:702.30px;right:1734.7px;font-size:14px;line-height:20px;color:#5f6368;-webkit-text-stroke:0.22px currentColor;letter-spacing:-0.391px;margin-right:0.391px;">Users</div>
<div class="a" style="left:790.3px;top:722.3px;width:31px;height:1px;background-image:linear-gradient(90deg,#9aa0a6 60%,transparent 60%);background-size:3.6px 1px"></div>
<div class="a" id="t154" style="top:702.30px;right:1602.7px;font-size:14px;line-height:20px;color:#5f6368;-webkit-text-stroke:0.22px currentColor;letter-spacing:-0.059px;margin-right:0.059px;">Sessions</div>
<div class="a" style="left:900.9px;top:722.3px;width:52.4px;height:1px;background-image:linear-gradient(90deg,#9aa0a6 60%,transparent 60%);background-size:3.6px 1px"></div>
<div class="a" id="t155" style="top:702.30px;right:1461.7px;font-size:14px;line-height:20px;color:#5f6368;-webkit-text-stroke:0.22px currentColor;letter-spacing:-0.294px;margin-right:0.294px;">Engaged</div>
<div class="a" style="left:1044.0px;top:722.3px;width:50.3px;height:1px;background-image:linear-gradient(90deg,#9aa0a6 60%,transparent 60%);background-size:3.6px 1px"></div>
<div class="a" id="t156" style="top:722.30px;right:1461.7px;font-size:14px;line-height:20px;color:#5f6368;-webkit-text-stroke:0.22px currentColor;letter-spacing:0.147px;margin-right:-0.147px;">sessions</div>
<div class="a" style="left:1042.8px;top:742.3px;width:51.5px;height:1px;background-image:linear-gradient(90deg,#9aa0a6 60%,transparent 60%);background-size:3.6px 1px"></div>
<div class="a" id="t157" style="top:702.30px;right:1239px;font-size:14px;line-height:20px;color:#5f6368;-webkit-text-stroke:0.22px currentColor;letter-spacing:0.001px;margin-right:-0.001px;">Average engagement time</div>
<div class="a" style="left:1157px;top:722.3px;width:160px;height:1px;background-image:linear-gradient(90deg,#9aa0a6 60%,transparent 60%);background-size:3.6px 1px"></div>
<div class="a" id="t158" style="top:722.30px;right:1239px;font-size:14px;line-height:20px;color:#5f6368;-webkit-text-stroke:0.22px currentColor;letter-spacing:-0.019px;margin-right:0.019px;">per session</div>
<div class="a" style="left:1249.6px;top:742.3px;width:67.4px;height:1px;background-image:linear-gradient(90deg,#9aa0a6 60%,transparent 60%);background-size:3.6px 1px"></div>
<div class="a" id="t159" style="top:702.30px;right:1062.6px;font-size:14px;line-height:20px;color:#5f6368;-webkit-text-stroke:0.22px currentColor;letter-spacing:-0.095px;margin-right:0.095px;">Engaged sessions</div>
<div class="a" style="left:1384.4px;top:722.3px;width:109px;height:1px;background-image:linear-gradient(90deg,#9aa0a6 60%,transparent 60%);background-size:3.6px 1px"></div>
<div class="a" id="t160" style="top:722.30px;right:1062.6px;font-size:14px;line-height:20px;color:#5f6368;-webkit-text-stroke:0.22px currentColor;letter-spacing:-0.123px;margin-right:0.123px;">per user</div>
<div class="a" style="left:1446.9px;top:742.3px;width:46.5px;height:1px;background-image:linear-gradient(90deg,#9aa0a6 60%,transparent 60%);background-size:3.6px 1px"></div>
<div class="a" id="t161" style="top:702.30px;right:919.4000000000001px;font-size:14px;line-height:20px;color:#5f6368;-webkit-text-stroke:0.22px currentColor;letter-spacing:-0.182px;margin-right:0.182px;">Events per</div>
<div class="a" style="left:1575.3px;top:722.3px;width:61.3px;height:1px;background-image:linear-gradient(90deg,#9aa0a6 60%,transparent 60%);background-size:3.6px 1px"></div>
<div class="a" id="t162" style="top:722.30px;right:919.4000000000001px;font-size:14px;line-height:20px;color:#5f6368;-webkit-text-stroke:0.22px currentColor;letter-spacing:0.022px;margin-right:-0.022px;">session</div>
<div class="a" style="left:1593.0px;top:742.3px;width:43.6px;height:1px;background-image:linear-gradient(90deg,#9aa0a6 60%,transparent 60%);background-size:3.6px 1px"></div>
<div class="a" id="t163" style="top:702.30px;right:783.5px;font-size:14px;line-height:20px;color:#5f6368;-webkit-text-stroke:0.22px currentColor;letter-spacing:-0.167px;margin-right:0.167px;">Engagement</div>
<div class="a" style="left:1698.6px;top:722.3px;width:73.9px;height:1px;background-image:linear-gradient(90deg,#9aa0a6 60%,transparent 60%);background-size:3.6px 1px"></div>
<div class="a" id="t164" style="top:722.30px;right:783.5px;font-size:14px;line-height:20px;color:#5f6368;-webkit-text-stroke:0.22px currentColor;letter-spacing:-0.108px;margin-right:0.108px;">rate</div>
<div class="a" style="left:1752.7px;top:742.3px;width:19.8px;height:1px;background-image:linear-gradient(90deg,#9aa0a6 60%,transparent 60%);background-size:3.6px 1px"></div>
<div class="a" id="t165" style="top:702.30px;right:644px;font-size:14px;line-height:20px;color:#5f6368;-webkit-text-stroke:0.22px currentColor;letter-spacing:-0.074px;margin-right:0.074px;">Event count</div>
<div class="a" style="left:1842.8px;top:722.3px;width:69.2px;height:1px;background-image:linear-gradient(90deg,#9aa0a6 60%,transparent 60%);background-size:3.6px 1px"></div>
<div class="a" id="t166" style="top:702.30px;right:488px;font-size:14px;line-height:20px;color:#5f6368;-webkit-text-stroke:0.22px currentColor;letter-spacing:-0.083px;margin-right:0.083px;">Conversions</div>
<div class="a" id="t167" style="top:702.30px;right:334.4000000000001px;font-size:14px;line-height:20px;color:#5f6368;-webkit-text-stroke:0.22px currentColor;letter-spacing:-0.055px;margin-right:0.055px;">Total revenue</div>
<div class="a" style="left:2142.2px;top:722.3px;width:79.4px;height:1px;background-image:linear-gradient(90deg,#9aa0a6 60%,transparent 60%);background-size:3.6px 1px"></div>
<div class="a" id="t168" style="top:724.00px;left:1835.3px;font-size:14px;line-height:20px;color:#5f6368;letter-spacing:0.033px;">All events</div>
<svg class="a" style="left:1909.8px;top:731.5px" width="9" height="5" viewBox="0 0 9 5"><path d="M0.5 0.5 L4.5 4.5 L8.5 0.5Z" fill="#5f6368"/></svg>
<div class="a" id="t169" style="top:724.00px;left:1989.7px;font-size:14px;line-height:20px;color:#5f6368;letter-spacing:0.033px;">All events</div>
<svg class="a" style="left:2064.7px;top:731.5px" width="9" height="5" viewBox="0 0 9 5"><path d="M0.5 0.5 L4.5 4.5 L8.5 0.5Z" fill="#5f6368"/></svg>
<div class="a" id="t170" style="top:765.80px;right:1735px;font-size:14.5px;line-height:20px;color:#202124;-webkit-text-stroke:0.22px currentColor;">8,987</div>
<div class="a" id="t171" style="top:789.00px;right:1735px;font-size:12.5px;line-height:18px;color:#5f6368;letter-spacing:-0.014px;margin-right:0.014px;">100% of total</div>
<div class="a" id="t172" style="top:765.80px;right:1603px;font-size:14.5px;line-height:20px;color:#202124;-webkit-text-stroke:0.22px currentColor;">16,583</div>
<div class="a" id="t173" style="top:789.00px;right:1603px;font-size:12.5px;line-height:18px;color:#5f6368;letter-spacing:-0.014px;margin-right:0.014px;">100% of total</div>
<div class="a" id="t174" style="top:765.80px;right:1462px;font-size:14.5px;line-height:20px;color:#202124;-webkit-text-stroke:0.22px currentColor;">4,952</div>
<div class="a" id="t175" style="top:789.00px;right:1462px;font-size:12.5px;line-height:18px;color:#5f6368;letter-spacing:-0.014px;margin-right:0.014px;">100% of total</div>
<div class="a" id="t176" style="top:765.80px;right:1239px;font-size:14.5px;line-height:20px;color:#202124;-webkit-text-stroke:0.22px currentColor;">2m 50s</div>
<div class="a" id="t177" style="top:789.50px;right:1239px;font-size:12px;line-height:17px;color:#5f6368;letter-spacing:-0.388px;margin-right:0.388px;">Avg 0%</div>
<div class="a" id="t178" style="top:765.80px;right:1063px;font-size:14.5px;line-height:20px;color:#202124;-webkit-text-stroke:0.22px currentColor;">0.55</div>
<div class="a" id="t179" style="top:789.50px;right:1063px;font-size:12px;line-height:17px;color:#5f6368;letter-spacing:-0.388px;margin-right:0.388px;">Avg 0%</div>
<div class="a" id="t180" style="top:765.80px;right:919px;font-size:14.5px;line-height:20px;color:#202124;-webkit-text-stroke:0.22px currentColor;">5.91</div>
<div class="a" id="t181" style="top:789.50px;right:919px;font-size:12px;line-height:17px;color:#5f6368;letter-spacing:-0.388px;margin-right:0.388px;">Avg 0%</div>
<div class="a" id="t182" style="top:765.80px;right:783px;font-size:14.5px;line-height:20px;color:#202124;-webkit-text-stroke:0.22px currentColor;">29.86%</div>
<div class="a" id="t183" style="top:789.50px;right:783px;font-size:12px;line-height:17px;color:#5f6368;letter-spacing:-0.388px;margin-right:0.388px;">Avg 0%</div>
<div class="a" id="t184" style="top:765.80px;right:629px;font-size:14.5px;line-height:20px;color:#202124;-webkit-text-stroke:0.22px currentColor;">97,976</div>
<div class="a" id="t185" style="top:789.00px;right:629px;font-size:12.5px;line-height:18px;color:#5f6368;letter-spacing:-0.014px;margin-right:0.014px;">100% of total</div>
<div class="a" id="t186" style="top:765.80px;right:475px;font-size:14.5px;line-height:20px;color:#202124;-webkit-text-stroke:0.22px currentColor;">19.00</div>
<div class="a" id="t187" style="top:789.00px;right:475px;font-size:12.5px;line-height:18px;color:#5f6368;letter-spacing:-0.014px;margin-right:0.014px;">100% of total</div>
<div class="a" id="t188" style="top:765.80px;right:343px;font-size:14.5px;line-height:20px;color:#202124;-webkit-text-stroke:0.22px currentColor;">$0.00</div>
<div class="a" id="t189" style="top:1174.50px;left:1142.4px;font-size:15px;line-height:21px;color:#5f6368;letter-spacing:-0.122px;">© 2023 Google |</div>
<div class="a" id="t190" style="top:1174.50px;left:1254px;font-size:15px;line-height:21px;color:#1a73e8;letter-spacing:0.060px;">Analytics home</div>
<div class="a" id="t191" style="top:1174.50px;left:1360.5px;font-size:15px;line-height:21px;color:#5f6368;">|</div>
<div class="a" id="t192" style="top:1174.50px;left:1369.3px;font-size:15px;line-height:21px;color:#1a73e8;letter-spacing:-0.027px;">Terms of Service</div>
<div class="a" id="t193" style="top:1174.50px;left:1484px;font-size:15px;line-height:21px;color:#5f6368;">|</div>
<div class="a" id="t194" style="top:1174.50px;left:1492.4px;font-size:15px;line-height:21px;color:#1a73e8;letter-spacing:-0.089px;">Privacy Policy</div>
<div class="a" id="t195" style="top:1174.50px;left:1588.8px;font-size:15px;line-height:21px;color:#5f6368;">|</div>
<svg class="a" style="left:1600px;top:1177px" width="18" height="17" viewBox="0 0 18 17"><path d="M2 2 H16 V13 H5 L2 16Z" fill="none" stroke="#5f6368" stroke-width="1.6" stroke-linejoin="round"/><rect x="8.2" y="4.5" width="1.6" height="4.5" fill="#5f6368"/><rect x="8.2" y="10" width="1.6" height="1.6" fill="#5f6368"/></svg>
<div class="a" id="t196" style="top:1175.50px;left:1622.8px;font-size:15px;line-height:21px;color:#5f6368;letter-spacing:-0.132px;">Send feedback</div>
<div class="a" style="left:2444px;top:1195px;width:56px;height:56px;background:#1a73e8;border-radius:50%;box-shadow:0 1px 2px rgba(60,64,67,.18),0 2px 7px 2px rgba(60,64,67,.1)"></div>
<svg class="a" style="left:2454px;top:1205px" width="40" height="40" viewBox="0 0 40 40"><g transform="translate(14.4,21) scale(1.17)"><path d="M-1.6 -9 h3.2 l.6 2.3 a7 7 0 0 1 2.2 1.3 l2.3 -.7 1.6 2.8 -1.7 1.6 a7 7 0 0 1 0 2.6 l1.7 1.6 -1.6 2.8 -2.3 -.7 a7 7 0 0 1 -2.2 1.3 l-.6 2.3 h-3.2 l-.6 -2.3 a7 7 0 0 1 -2.2 -1.3 l-2.3 .7 -1.6 -2.8 1.7 -1.6 a7 7 0 0 1 0 -2.6 l-1.7 -1.6 1.6 -2.8 2.3 .7 a7 7 0 0 1 2.2 -1.3z" fill="none" stroke="#fff" stroke-width="1.8"/><circle r="2.5" fill="#fff"/></g><path d="M27.9 3 L29.2 6.9 L33.1 8.2 L29.2 9.5 L27.9 13.4 L26.6 9.5 L22.7 8.2 L26.6 6.9Z" fill="#fff"/><path d="M30.4 16.3 L31.3 19 L34 19.9 L31.3 20.8 L30.4 23.5 L29.5 20.8 L26.8 19.9 L29.5 19Z" fill="#fff"/></svg>
</body></html>
